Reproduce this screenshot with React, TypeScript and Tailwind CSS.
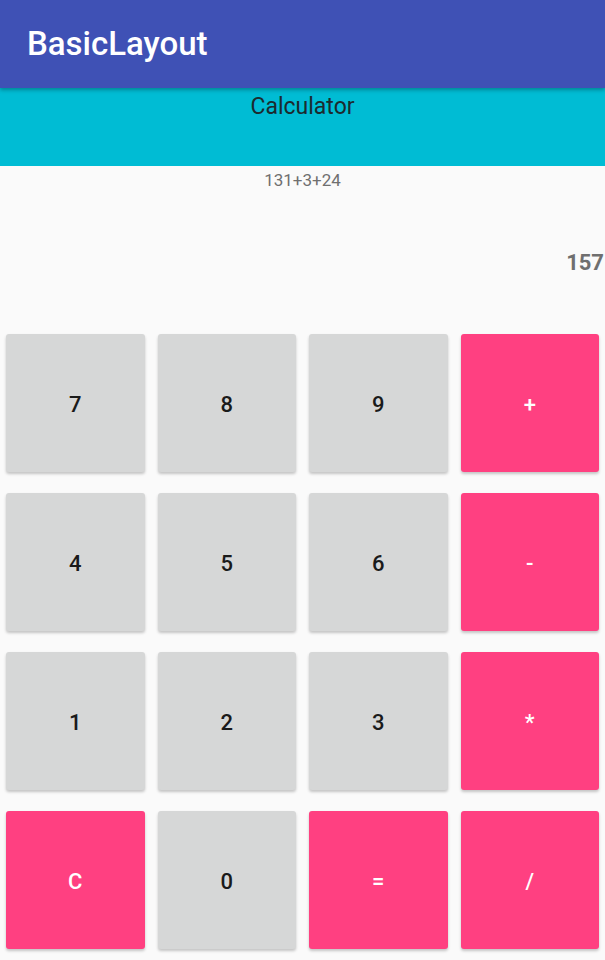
const KEYS: { label: string; accent?: boolean }[] = [
  { label: '7' },
  { label: '8' },
  { label: '9' },
  { label: '+', accent: true },
  { label: '4' },
  { label: '5' },
  { label: '6' },
  { label: '-', accent: true },
  { label: '1' },
  { label: '2' },
  { label: '3' },
  { label: '*', accent: true },
  { label: 'C', accent: true },
  { label: '0' },
  { label: '=', accent: true },
  { label: '/', accent: true },
];

export default function App() {
  return (
    <div className="flex h-[960px] w-full flex-col overflow-hidden bg-[#fafafa] font-['Roboto',sans-serif]">
      {/* App bar */}
      <div className="relative z-10 h-[88px] shrink-0 bg-[#3f51b5] px-[27px] pt-[25px] shadow-[0_2px_4px_rgba(0,0,0,0.3)]">
        <h1 className="text-[33px] font-medium leading-[38px] text-white">BasicLayout</h1>
      </div>

      {/* Title band */}
      <div className="h-[78px] shrink-0 bg-[#00bcd4] pt-[5px] text-center">
        <span className="text-[23px] leading-[27px] text-[#1c2a2e]">Calculator</span>
      </div>

      {/* Display */}
      <div className="mt-[4px] text-center text-[17px] leading-[20px] text-[#6f6f6f]">131+3+24</div>
      <div className="mt-[60px] pr-[1px] text-right text-[22px] font-bold leading-[26px] text-[#6f6f6f]">157</div>

      {/* Keypad */}
      <div className="mt-[58px] grid grid-cols-4 gap-x-[13px] gap-y-[21px] px-[6px]">
        {KEYS.map((key) => (
          <button
            key={key.label}
            className={
              key.accent
                ? 'flex h-[138px] items-center justify-center rounded-[3px] bg-[#ff4081] pt-[2px] text-[22px] font-medium text-white shadow-[0_2px_3px_rgba(0,0,0,0.22)]'
                : 'flex h-[138px] items-center justify-center rounded-[3px] bg-[#d6d7d7] pt-[2px] text-[22px] font-medium text-[#1a1a1a] shadow-[0_2px_3px_rgba(0,0,0,0.22)]'
            }
          >
            {key.label}
          </button>
        ))}
      </div>
    </div>
  );
}
